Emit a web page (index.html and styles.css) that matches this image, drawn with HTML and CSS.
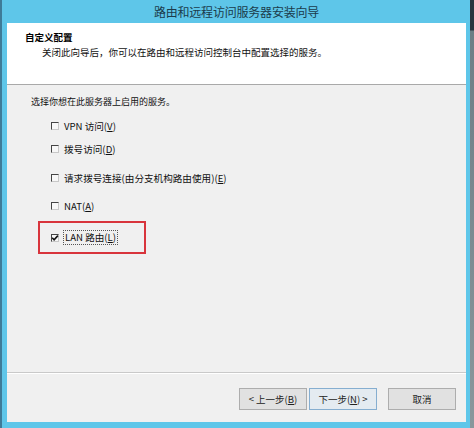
FILE: index.html
```html
<!DOCTYPE html>
<html lang="zh-CN">
<head>
<meta charset="utf-8">
<link rel="stylesheet" href="styles.css">
</head>
<body>
<div class="screen">
  <div class="edge-left"></div>
  <div class="window">
    <div class="titlebar">路由和远程访问服务器安装向导</div>
    <div class="client">
      <div class="header">
        <div class="h-title">自定义配置</div>
        <div class="h-sub">关闭此向导后，你可以在路由和远程访问控制台中配置选择的服务。</div>
      </div>
      <div class="body">
        <div class="prompt">选择你想在此服务器上启用的服务。</div>
        <div class="opts">
          <div class="opt r1"><span class="cb"></span><span class="lbl">VPN 访问(<u>V</u>)</span></div>
          <div class="opt r2"><span class="cb"></span><span class="lbl">拨号访问(<u>D</u>)</span></div>
          <div class="opt r3"><span class="cb"></span><span class="lbl">请求拨号连接(由分支机构路由使用)(<u>E</u>)</span></div>
          <div class="opt r4"><span class="cb"></span><span class="lbl">NAT(<u>A</u>)</span></div>
          <div class="highlight">
            <div class="opt"><span class="cb checked"><svg viewBox="0 0 8 8" width="8" height="8"><path d="M1.2 3.8 L3.1 5.8 L6.9 1.6" fill="none" stroke="#111" stroke-width="1.6"/></svg></span><span class="lbl focus">LAN 路由(<u>L</u>)</span></div>
          </div>
        </div>
      </div>
      <div class="footer">
        <button class="btn">&lt; 上一步(<u>B</u>)</button>
        <button class="btn default">下一步(<u>N</u>) &gt;</button>
        <button class="btn cancel">取消</button>
      </div>
    </div>
  </div>
  <div class="edge-right"></div>
</div>
</body>
</html>
```

FILE: styles.css
```css
html, body {
  margin: 0;
  padding: 0;
}
body {
  width: 474px;
  height: 428px;
  overflow: hidden;
  font-family: "Noto Sans CJK SC", "Noto Sans", sans-serif;
  color: #1a1a1a;
}
.screen {
  display: flex;
  width: 474px;
  height: 428px;
}
.edge-left {
  width: 2px;
  background: #3e7b98;
}
.edge-right {
  width: 4px;
  background: linear-gradient(#2a3640 0, #2a3640 30px, #6d7e86 31px, #8a979c 100%);
}
.window {
  width: 468px;
  background: #5ec6e9;
  display: flex;
  flex-direction: column;
  padding: 0 4px 6px 5px;
  box-sizing: border-box;
}
.titlebar {
  height: 23px;
  line-height: 24px;
  text-align: center;
  font-size: 12px;
  color: #1b3c4c;
  letter-spacing: -0.2px;
}
.client {
  flex: 1;
  display: flex;
  flex-direction: column;
  background: #f0f0f0;
}
.header {
  height: 62px;
  background: #fff;
  border-bottom: 1px solid #a9a9a9;
  padding: 7px 0 0 18px;
  box-sizing: border-box;
}
.h-title {
  font-weight: bold;
  font-size: 9.5px;
  line-height: 15px;
  color: #000;
}
.h-sub {
  font-size: 9.5px;
  line-height: 14px;
  padding-left: 17px;
  color: #111;
}
.body {
  flex: 1;
  padding: 10px 0 0 24px;
  border-bottom: 1px solid #c9c9c9;
  box-shadow: 0 1px 0 #fff;
}
.prompt {
  font-size: 9px;
  line-height: 14px;
  color: #111;
}
.opts {
  display: flex;
  flex-direction: column;
}
.opt {
  display: flex;
  align-items: center;
  gap: 5px;
  height: 14px;
  font-size: 9.6px;
  color: #111;
}
.opts > .opt {
  padding-left: 20px;
}
.r1 { margin-top: 10px; }
.r2 { margin-top: 9px; }
.r3 { margin-top: 15px; }
.r4 { margin-top: 14px; }
.cb {
  width: 8px;
  height: 8px;
  box-sizing: border-box;
  border-top: 1px solid #444;
  border-left: 1px solid #444;
  border-right: 1px solid #c8c8c8;
  border-bottom: 1px solid #c8c8c8;
  background: #f7f7f7;
  display: inline-flex;
  flex: none;
}
.cb.checked {
  border-right-color: #c8c8c8;
  overflow: visible;
  position: relative;
}
.cb svg {
  display: block;
  position: absolute;
  left: -1px;
  top: -1px;
}
.lbl u {
  text-decoration: underline;
  text-underline-offset: 1px;
}
.highlight {
  margin-top: 8px;
  margin-left: 7px;
  width: 108px;
  height: 33px;
  box-sizing: border-box;
  border: 2px solid #d8343c;
  display: flex;
  align-items: center;
  padding-left: 11px;
}
.lbl.focus {
  outline: 1px dotted #555;
  outline-offset: 0;
  padding: 0 1px;
  line-height: 13px;
}
.footer {
  height: 49px;
  display: flex;
  align-items: flex-start;
  justify-content: flex-end;
  padding: 15px 10px 0 0;
  box-sizing: border-box;
  gap: 2px;
}
.btn {
  width: 68px;
  height: 22px;
  box-sizing: border-box;
  background: #e1e1e1;
  border: 1px solid #adadad;
  font-family: "Noto Sans CJK SC", "Noto Sans", sans-serif;
  font-size: 9.5px;
  color: #222;
  padding: 0;
  margin: 0;
}
.btn.default {
  border-color: #86aed0;
  background: #e4ebf1;
}
.btn.cancel {
  margin-left: 9px;
}
.btn u {
  text-underline-offset: 1px;
}
```
